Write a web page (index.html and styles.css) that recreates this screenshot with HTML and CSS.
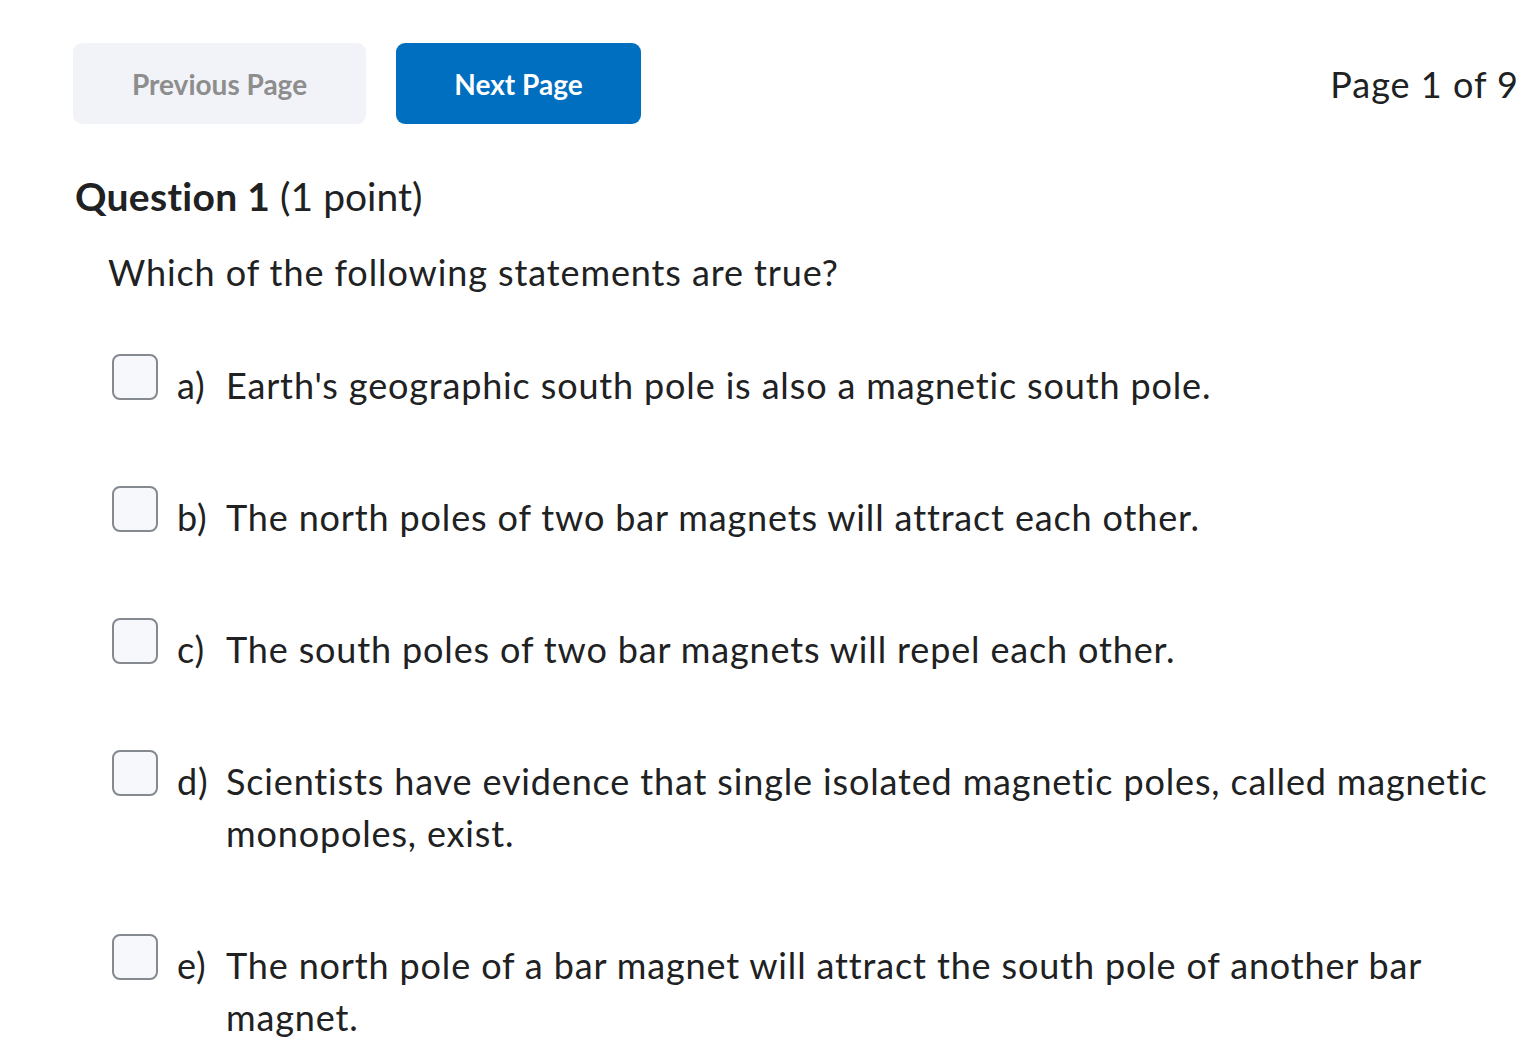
FILE: index.html
```html
<!DOCTYPE html>
<html lang="en">
<head>
<meta charset="utf-8">
<title>Quiz</title>
<link rel="stylesheet" href="styles.css">
</head>
<body>
<div class="page">
  <div class="nav">
    <button class="btn btn-prev">Previous Page</button>
    <button class="btn btn-next">Next Page</button>
    <div class="pager">Page 1 of 9</div>
  </div>
  <h2 class="q-title"><strong>Question 1</strong> (1 point)</h2>
  <div class="q-body">
    <p class="q-text">Which of the following statements are true?</p>
    <ul class="options">
      <li class="option"><span class="box"></span><span class="letter">a)</span><span class="otext">Earth's geographic south pole is also a magnetic south pole.</span></li>
      <li class="option"><span class="box"></span><span class="letter">b)</span><span class="otext">The north poles of two bar magnets will attract each other.</span></li>
      <li class="option"><span class="box"></span><span class="letter">c)</span><span class="otext">The south poles of two bar magnets will repel each other.</span></li>
      <li class="option"><span class="box"></span><span class="letter">d)</span><span class="otext">Scientists have evidence that single isolated magnetic poles, called magnetic monopoles, exist.</span></li>
      <li class="option"><span class="box"></span><span class="letter">e)</span><span class="otext">The north pole of a bar magnet will attract the south pole of another bar magnet.</span></li>
    </ul>
  </div>
</div>
</body>
</html>
```
FILE: styles.css
```css
* { box-sizing: border-box; }
html, body { margin: 0; padding: 0; background: #fff; }
body {
  font-family: Lato, "Open Sans", sans-serif;
  color: #202122;
  font-variant-ligatures: none;
}
.page {
  padding: 43px 11px 0 73px;
}
.nav {
  display: flex;
  align-items: center;
  gap: 30px;
}
.btn {
  font-family: Lato, sans-serif;
  font-variant-ligatures: none;
  font-weight: 700;
  font-size: 28px;
  height: 81px;
  border-radius: 9px;
  border: none;
  padding: 0;
}
.btn-prev {
  width: 293px;
  background: #f1f3f8;
  color: #8d8d8d;
}
.btn-next {
  width: 245px;
  background: #006fbf;
  color: #fff;
}
.pager {
  margin-left: auto;
  font-size: 36px;
  letter-spacing: 1px;
  margin-right: -3px;
  color: #202122;
}
.q-title {
  margin: 48px 0 0 2px;
  font-size: 39px;
  font-weight: 400;
  line-height: 48px;
}
.q-title strong { font-weight: 700; letter-spacing: 0.3px; }
.q-body { padding-left: 35px; }
.q-text {
  margin: 28px 0 0;
  font-size: 36px;
  line-height: 48px;
  letter-spacing: 0.9px;
}
.options {
  list-style: none;
  margin: 63px 0 0;
  padding: 0 0 0 4px;
}
.option {
  display: flex;
  align-items: flex-start;
  font-size: 36px;
  line-height: 52px;
  letter-spacing: 0.85px;
  margin-bottom: 80px;
}
.option:last-child { margin-bottom: 0; }
.box {
  flex: none;
  width: 46px;
  height: 46px;
  border: 2px solid #858990;
  border-radius: 8px;
  background: #f7f8fc;
  margin-top: -5px;
  margin-right: 19px;
}
.letter {
  flex: none;
  width: 49px;
}
.otext { flex: 1; }
```
